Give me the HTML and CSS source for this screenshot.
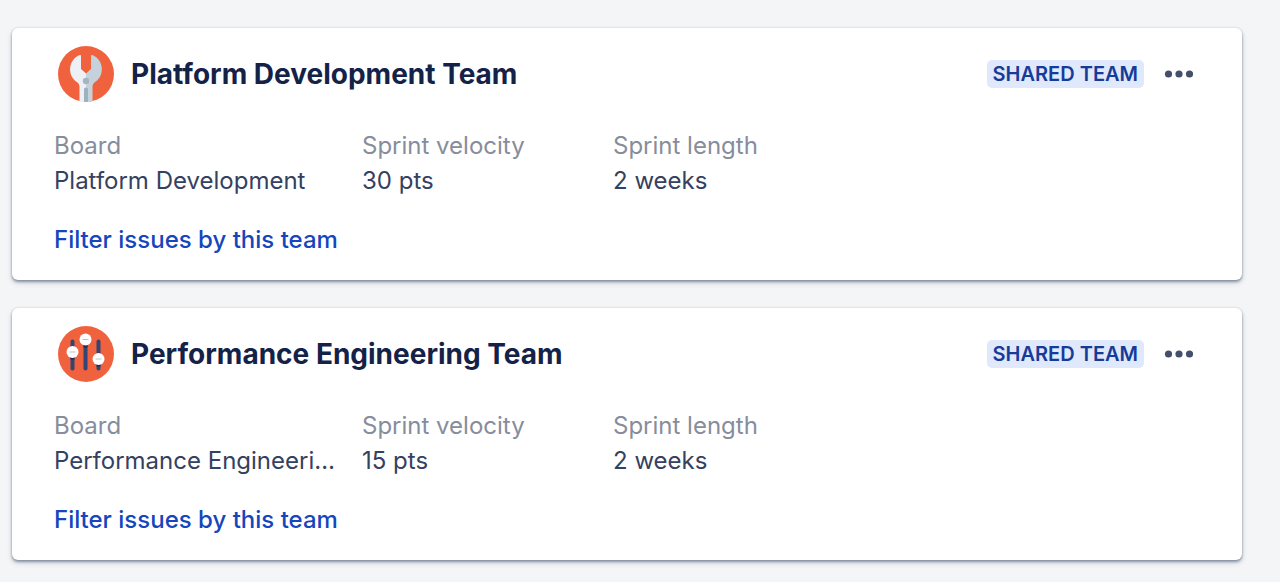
FILE: index.html
```
<!DOCTYPE html>
<html lang="en">
<head>
<meta charset="utf-8">
<title>Teams</title>
<link rel="stylesheet" href="styles.css">
</head>
<body>
<main class="teams">
  <article class="card">
    <header class="card-header">
      <svg class="avatar" viewBox="0 0 56 56" aria-hidden="true">
        <circle cx="28" cy="28" r="28" fill="#f0623e"/>
        <path d="M23 9.500V23l5 4.500V56q-3.500 0-6.500-.6V40.500q0-3-2.500-4.500C10 31 9 15 21 9.300q2-.9 2 .2z" fill="#edf1f5"/>
        <path d="M33 9.500V23l-5 4.500V56q3.500 0 6.500-.6V40.500q0-3 2.500-4.500C46 31 47 15 35 9.300q-2-.9-2 .2z" fill="#c5d2db"/>
        <circle cx="28" cy="35" r="3.200" fill="#a5b5c2"/>
        <path d="M26 56V43q0-1.500 2-1.500t2 1.500v13z" fill="#9fb1bf"/>
      </svg>
      <h2 class="team-name">Platform Development Team</h2>
      <span class="badge">SHARED TEAM</span>
      <button class="more" type="button" aria-label="More actions">
        <svg viewBox="0 0 30 8"><circle cx="4.500" cy="4" r="3.600"/><circle cx="15" cy="4" r="3.600"/><circle cx="25.500" cy="4" r="3.600"/></svg>
      </button>
    </header>
    <dl class="details">
      <div><dt>Board</dt><dd>Platform Development</dd></div>
      <div><dt>Sprint velocity</dt><dd>30 pts</dd></div>
      <div><dt>Sprint length</dt><dd>2 weeks</dd></div>
    </dl>
    <a class="filter" href="#platform">Filter issues by this team</a>
  </article>
  <article class="card">
    <header class="card-header">
      <svg class="avatar" viewBox="0 0 56 56" aria-hidden="true">
        <circle cx="28" cy="28" r="28" fill="#f0623e"/>
        <path d="M14.500 15.500v27M27.500 15.500v27M40.500 15.500v27" stroke="#344573" stroke-width="4" stroke-linecap="round"/>
        <path d="M14.500 30v3.500M27.500 18v3.500M40.500 37v3.500" stroke="#1f2b50" stroke-width="4"/>
        <g fill="#fff"><circle cx="14.500" cy="26" r="6"/><circle cx="27.500" cy="13.500" r="6"/><circle cx="40.500" cy="33" r="6"/></g>
        <path d="M11.500 26h6M24.500 13.500h6M37.500 33h6" stroke="#b9c1cf" stroke-width="1"/>
      </svg>
      <h2 class="team-name">Performance Engineering Team</h2>
      <span class="badge">SHARED TEAM</span>
      <button class="more" type="button" aria-label="More actions">
        <svg viewBox="0 0 30 8"><circle cx="4.500" cy="4" r="3.600"/><circle cx="15" cy="4" r="3.600"/><circle cx="25.500" cy="4" r="3.600"/></svg>
      </button>
    </header>
    <dl class="details">
      <div><dt>Board</dt><dd>Performance Engineering</dd></div>
      <div><dt>Sprint velocity</dt><dd>15 pts</dd></div>
      <div><dt>Sprint length</dt><dd>2 weeks</dd></div>
    </dl>
    <a class="filter" href="#performance">Filter issues by this team</a>
  </article>
</main>
</body>
</html>
```
FILE: styles.css
```
* { box-sizing: border-box; }
body { margin: 0; background: #f4f5f7; color: #344160; font: 24px/35px Inter, sans-serif; }
.teams { display: grid; gap: 28px; padding: 28px 38px 22px 12px; }
.card { padding: 16px 42px 23px; border-radius: 6px; background: #fff; box-shadow: 0 2px 3px rgba(9,30,66,.4), 0 3px 6px rgba(9,30,66,.12), 0 0 2px rgba(9,30,66,.15); }
.card-header { display: flex; align-items: center; height: 60px; padding-left: 4px; }
.avatar { width: 56px; height: 56px; flex: none; }
.team-name { flex: 1; min-width: 0; margin: 0 0 0 17px; color: #152248; font-size: 28px; font-weight: 650; }
.badge { padding: 0 6px; border-radius: 5px; background: #dfe9fb; color: #173b98; font-size: 20px; line-height: 28px; font-weight: 600; }
.more { display: flex; margin-left: 14px; padding: 12px 6px; border: 0; background: none; cursor: pointer; }
.more svg { width: 30px; height: 8px; fill: #454f6b; }
.details { display: grid; grid-template-columns: 282px 225px 220px; column-gap: 26px; margin: 24px 0; }
.details div { min-width: 0; }
dt { color: #868d9c; }
dd { margin: 0; overflow: hidden; text-overflow: ellipsis; white-space: nowrap; }
.filter { display: inline-block; color: #1446bd; font-weight: 500; text-decoration: none; }
```
